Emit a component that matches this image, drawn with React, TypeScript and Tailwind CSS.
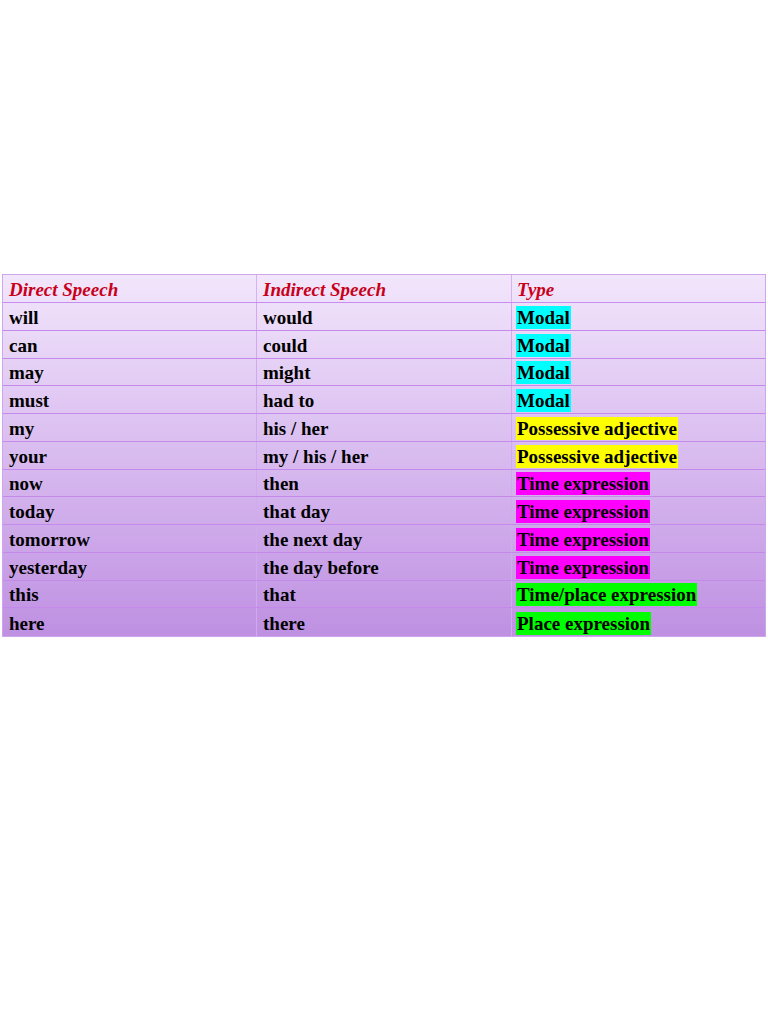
const rows: { d: string; i: string; t: string; c: string }[] = [
  { d: "will", i: "would", t: "Modal", c: "bg-[#00ffff]" },
  { d: "can", i: "could", t: "Modal", c: "bg-[#00ffff]" },
  { d: "may", i: "might", t: "Modal", c: "bg-[#00ffff]" },
  { d: "must", i: "had to", t: "Modal", c: "bg-[#00ffff]" },
  { d: "my", i: "his / her", t: "Possessive adjective", c: "bg-[#ffff00]" },
  { d: "your", i: "my / his / her", t: "Possessive adjective", c: "bg-[#ffff00]" },
  { d: "now", i: "then", t: "Time expression", c: "bg-[#ff00ff]" },
  { d: "today", i: "that day", t: "Time expression", c: "bg-[#ff00ff]" },
  { d: "tomorrow", i: "the next day", t: "Time expression", c: "bg-[#ff00ff]" },
  { d: "yesterday", i: "the day before", t: "Time expression", c: "bg-[#ff00ff]" },
  { d: "this", i: "that", t: "Time/place expression", c: "bg-[#00ff00]" },
  { d: "here", i: "there", t: "Place expression", c: "bg-[#00ff00]" },
];

export default function App() {
  return (
    <div className="w-[768px] h-[1024px] bg-white pt-[274px] pl-[2px]">
      <div
        className="w-[764px] border border-[#cfa6ee] bg-gradient-to-b from-[#f2e6fb] to-[#bf90e2] text-[19px] leading-none font-bold text-black"
        style={{ fontFamily: '"Liberation Serif", "Times New Roman", serif' }}
      >
        <div className="grid grid-cols-[254px_255px_1fr] h-[28px] border-b border-[#c98cf0]">
          <div className="pl-[6px] pt-[2px] flex items-center italic text-[#c8001a] border-r border-[#d7b2f2]">Direct Speech</div>
          <div className="pl-[6px] pt-[2px] flex items-center italic text-[#c8001a] border-r border-[#d7b2f2]">Indirect Speech</div>
          <div className="pl-[5px] pt-[2px] flex items-center italic text-[#c8001a]">Type</div>
        </div>
        {rows.map((r, idx) => (
          <div
            key={idx}
            className={
              "grid grid-cols-[254px_255px_1fr] h-[27.75px] " +
              (idx < rows.length - 1 ? "border-b border-[#c489ea]" : "")
            }
          >
            <div className="pl-[6px] pt-[2px] flex items-center border-r border-[#d2a8ef]">{r.d}</div>
            <div className="pl-[6px] pt-[2px] flex items-center border-r border-[#d2a8ef]">{r.i}</div>
            <div className="pl-[4px] pt-[2px] flex items-center">
              <span className={r.c + " px-[1px] py-[2px]"}>{r.t}</span>
            </div>
          </div>
        ))}
      </div>
    </div>
  );
}
